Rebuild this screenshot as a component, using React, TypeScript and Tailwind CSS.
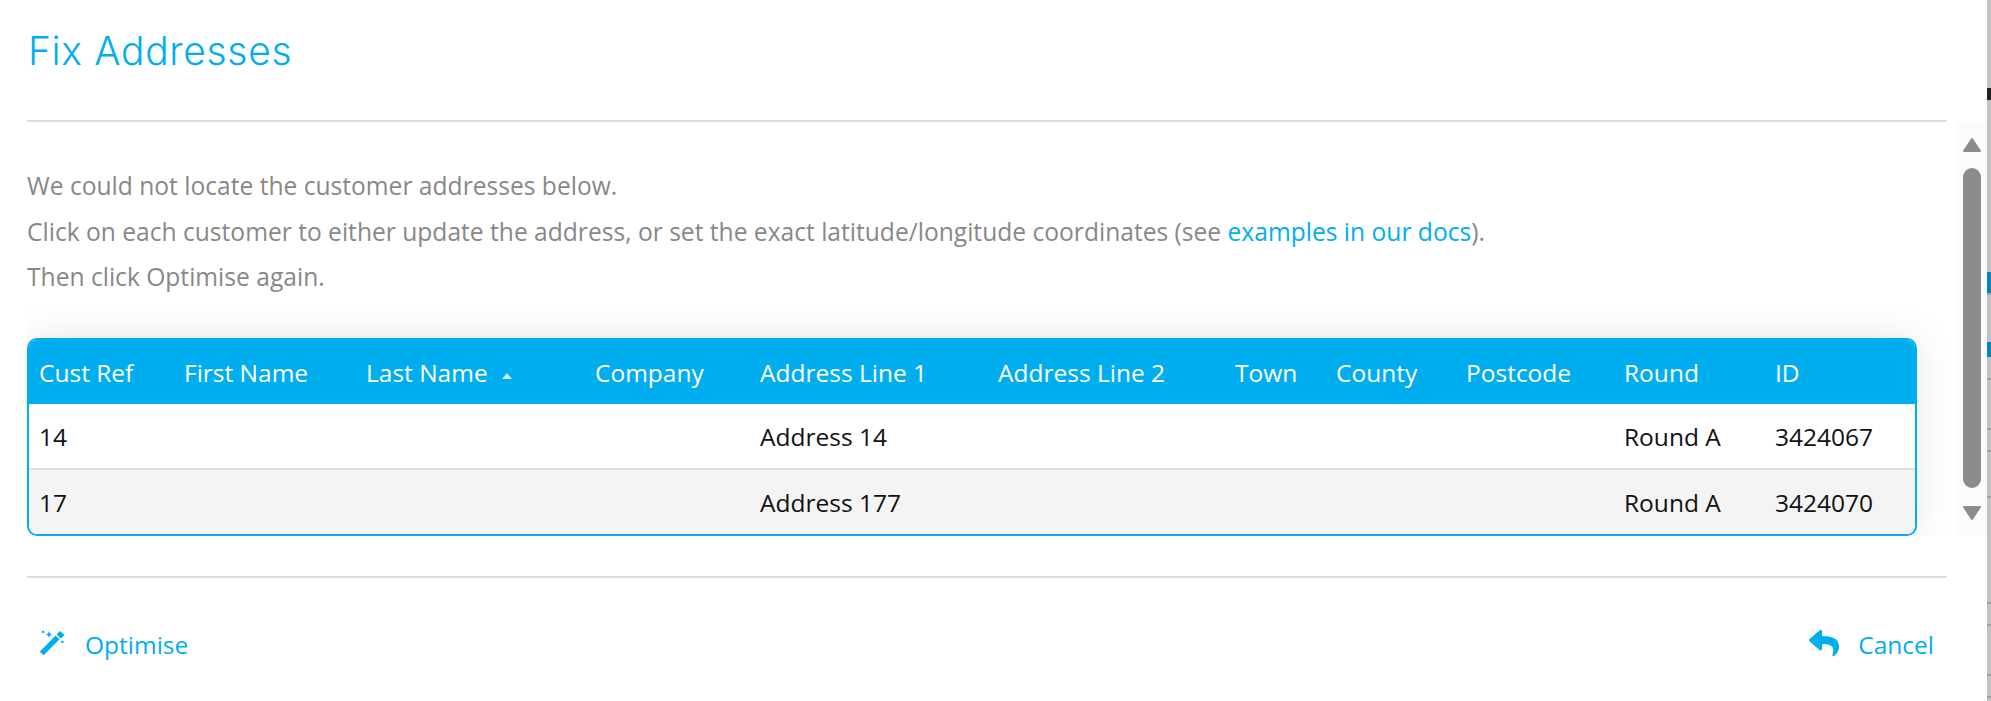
import React from "react";
import { FaReply } from "react-icons/fa";

const columns = [
  { label: "Cust Ref", w: "w-[145px]" },
  { label: "First Name", w: "w-[182px]" },
  { label: "Last Name", w: "w-[229px]", sort: true },
  { label: "Company", w: "w-[165px]" },
  { label: "Address Line 1", w: "w-[238px]" },
  { label: "Address Line 2", w: "w-[237px]" },
  { label: "Town", w: "w-[101px]" },
  { label: "County", w: "w-[130px]" },
  { label: "Postcode", w: "w-[158px]" },
  { label: "Round", w: "w-[151px]" },
  { label: "ID", w: "w-[150px]" },
];

const rows = [
  ["14", "", "", "", "Address 14", "", "", "", "", "Round A", "3424067"],
  ["17", "", "", "", "Address 177", "", "", "", "", "Round A", "3424070"],
];

function Wand() {
  return (
    <svg width="27" height="26" viewBox="0 0 27 26" fill="#00aeef" className="-translate-y-[2px]">
      <path d="M0.7 21.7 L16.6 5.5 L20.6 9.3 L4.7 25.2 Z" />
      <path d="M17.6 4.5 L20.8 1 L25.7 5 L21.6 8.4 Z" />
      <rect x="3" y="0.8" width="2.2" height="2.2" />
      <path d="M10 1 L11 3.4 L13.4 4.4 L11 5.4 L10 7.8 L9 5.4 L6.6 4.4 L9 3.4 Z" />
      <rect x="22.3" y="10.8" width="2.2" height="2.2" />
    </svg>
  );
}

function Arrow({ down }: { down?: boolean }) {
  return (
    <svg width="18" height="14" viewBox="0 0 18 14" fill="#8c8c8c" stroke="#8c8c8c" strokeWidth="2" strokeLinejoin="round">
      <path d={down ? "M1 1 L17 1 L9 13 Z" : "M9 1 L17 13 L1 13 Z"} />
    </svg>
  );
}

function Tick() {
  return <div className="h-[2px] shrink-0 bg-[#a0a0a0]" />;
}

function BackgroundSliver() {
  return (
    <div className="flex h-[701px] w-[4px] flex-col overflow-hidden bg-[#c2c2c2]">
      <div className="h-[88px] shrink-0" />
      <div className="h-[12px] shrink-0 bg-[#222222]" />
      <div className="h-[172px] shrink-0" />
      <div className="h-[21px] shrink-0 bg-[#0085c0]" />
      <Tick />
      <div className="h-[47px] shrink-0" />
      <div className="h-[15px] shrink-0 bg-[#0085c0]" />
      <div className="h-[21px] shrink-0" />
      <Tick />
      <div className="h-[48px] shrink-0" />
      <Tick />
      <div className="h-[20px] shrink-0" />
      <Tick />
      <div className="h-[44px] shrink-0" />
      <Tick />
      <div className="h-[104px] shrink-0" />
      <Tick />
      <div className="h-[20px] shrink-0" />
      <Tick />
      <div className="h-[48px] shrink-0" />
      <Tick />
      <div className="h-[20px] shrink-0" />
      <Tick />
    </div>
  );
}

export default function App() {
  return (
    <div className="flex h-[701px] w-[1991px] overflow-hidden bg-white font-['Open_Sans',sans-serif]">
      <div className="flex w-[1987px] flex-col pl-[27px]">
        <header className="flex h-[120px] w-[1920px] items-start">
          <h1 className="ml-[1px] mt-[25px] font-['Inter',sans-serif] text-[39px] font-light leading-[52px] tracking-[0.65px] text-[#00aeef]">
            Fix Addresses
          </h1>
        </header>
        <div className="h-[2px] w-[1920px] bg-[#dedede]" />

        <div className="flex h-[414px]">
          <div className="w-[1930px] overflow-hidden">
            <div className="pt-[41px] text-[24.6px] leading-[45.5px] text-[#888888]">
              <p>We could not locate the customer addresses below.</p>
              <p>
                Click on each customer to either update the address, or set the exact latitude/longitude coordinates (see{" "}
                <a className="text-[#00aeef]">examples in our docs</a>).
              </p>
              <p>Then click Optimise again.</p>
            </div>
            <div className="mt-[38.5px] w-[1890px] overflow-hidden rounded-[10px] border-2 border-[#00aeef] shadow-[0_0_40px_rgba(0,0,0,0.10)]">
              <table className="w-full table-fixed border-collapse text-left text-[24.5px]">
                <thead>
                  <tr className="h-[64px] bg-[#00aeef] text-white">
                    {columns.map((c) => (
                      <th key={c.label} className={`${c.w} pl-[10px] pt-[2px] font-normal whitespace-nowrap`}>
                        {c.label}
                        {c.sort && (
                          <span className="ml-[14px] inline-block h-0 w-0 -translate-y-[3px] border-x-[5.5px] border-b-[6px] border-x-transparent border-b-white/80" />
                        )}
                      </th>
                    ))}
                  </tr>
                </thead>
                <tbody className="text-[#111111]">
                  {rows.map((r, i) => (
                    <tr key={i} className={i === 0 ? "h-[65px] border-b-2 border-[#dedede] bg-white" : "h-[65px] bg-[#f4f4f4]"}>
                      {r.map((v, j) => (
                        <td key={j} className="pl-[10px] pt-[2px] whitespace-nowrap">
                          {v}
                        </td>
                      ))}
                    </tr>
                  ))}
                </tbody>
              </table>
            </div>
          </div>
          <div className="flex w-[30px] flex-col items-center bg-[#fbfbfb] pt-[16px]">
            <Arrow />
            <div className="mt-[16px] h-[320px] w-[18px] rounded-[9px] bg-[#8c8c8c]" />
            <div className="mt-[18px]">
              <Arrow down />
            </div>
          </div>
        </div>

        <div className="mt-[40px] h-[2px] w-[1920px] bg-[#dedede]" />
        <footer className="flex w-[1920px] items-center justify-between pt-[52px] text-[24.5px] leading-[30px] text-[#00aeef]">
          <button className="ml-[12px] flex items-center gap-[19px]">
            <Wand />
            <span>Optimise</span>
          </button>
          <button className="mr-[13px] flex items-center gap-[19px]">
            <FaReply className="h-[30px] w-[30px] -translate-y-[2px]" />
            <span>Cancel</span>
          </button>
        </footer>
      </div>
      <BackgroundSliver />
    </div>
  );
}
